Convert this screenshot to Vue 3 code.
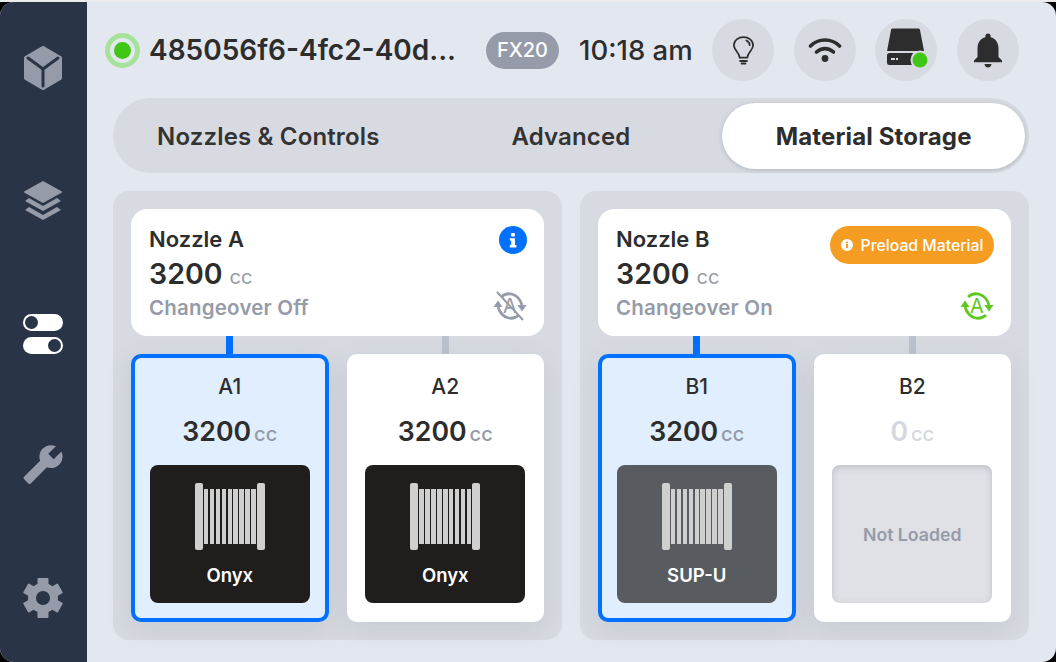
<script setup>
const tabs = ['Nozzles & Controls', 'Advanced', 'Material Storage']
const gearTeeth = [0, 60, 120]
const ribs = [0, 1, 2, 3, 4, 5, 6, 7, 8]

const nozzles = [
  {
    name: 'Nozzle A',
    volume: 3200,
    changeover: false,
    slots: [
      { id: 'A1', volume: 3200, material: 'Onyx', active: true, tone: 'dark' },
      { id: 'A2', volume: 3200, material: 'Onyx', active: false, tone: 'dark' }
    ]
  },
  {
    name: 'Nozzle B',
    volume: 3200,
    changeover: true,
    slots: [
      { id: 'B1', volume: 3200, material: 'SUP-U', active: true, tone: 'grey' },
      { id: 'B2', volume: 0, material: '', active: false, tone: 'empty' }
    ]
  }
]
</script>

<template>
  <div class="frame">
    <div class="app">
      <nav class="sidebar">
        <svg class="side-icon" viewBox="0 0 40 44">
          <path d="M20 2 37 12 V32 L20 42 3 32 V12 Z" fill="#959ba8" stroke="#959ba8" stroke-width="4" stroke-linejoin="round" />
          <path d="M5 12 20 23 35 12 M20 23 V40" fill="none" stroke="#2a3447" stroke-width="3" stroke-linecap="round" stroke-linejoin="round" />
        </svg>
        <svg class="side-icon" viewBox="0 0 40 42">
          <path d="M20 2 38 12 20 22 2 12 Z" fill="#959ba8" stroke="#959ba8" stroke-width="2" stroke-linejoin="round" />
          <path d="M6 18 2 21 20 31 38 21 34 18 20 26 Z" fill="#959ba8" />
          <path d="M6 27 2 30 20 40 38 30 34 27 20 35 Z" fill="#959ba8" />
        </svg>
        <div class="toggles">
          <span class="toggle left"><i></i></span>
          <span class="toggle right"><i></i></span>
        </div>
        <svg class="side-icon" viewBox="0.7 1 22.6 22.6">
          <path transform="translate(24 0) scale(-1 1)" d="M22.7 19l-9.1-9.1c.9-2.3.4-5-1.5-6.9-2-2-5-2.4-7.4-1.3L9 6 6 9 1.6 4.7C.4 7.1.9 10.1 2.9 12.1c1.9 1.9 4.6 2.4 6.9 1.5l9.1 9.1c.4.4 1 .4 1.4 0l2.3-2.3c.5-.4.5-1.1.1-1.4z" fill="#959ba8" />
        </svg>
        <svg class="side-icon" viewBox="0 0 40 40">
          <rect v-for="a in gearTeeth" :key="a" x="14.5" y="0" width="11" height="40" rx="1" fill="#959ba8" :transform="`rotate(${a} 20 20)`" />
          <circle cx="20" cy="20" r="15" fill="#959ba8" />
          <circle cx="20" cy="20" r="7" fill="#2a3447" />
        </svg>
      </nav>

      <main class="main">
        <header class="topbar">
          <span class="status"><i></i></span>
          <span class="device">485056f6-4fc2-40d...</span>
          <span class="chip">FX20</span>
          <span class="time">10:18 am</span>
          <div class="round-btns">
            <button class="round">
              <svg width="23" height="30" viewBox="0 0 24 30" fill="none" stroke="#2d2d2d" stroke-width="1.8" stroke-linecap="round" stroke-linejoin="round">
                <path d="M8 23 C8 18 2 15 2 10 C2 5 6.5 1.5 12 1.5 C17.5 1.5 22 5 22 10 C22 15 16 18 16 23 Z" />
                <path d="M8.5 26.5 H15.5 M10 29 H14" stroke-width="2" />
                <path d="M15 5 C17 6 18.5 8 18.5 10" />
              </svg>
            </button>
            <button class="round">
              <svg width="34" height="26" viewBox="0 0 34 26" fill="none" stroke="#2d2d2d" stroke-width="3.6" stroke-linecap="round">
                <path d="M2.5 9 C10.5 1 23.5 1 31.5 9" />
                <path d="M8.5 15 C13.5 10.5 20.5 10.5 25.5 15" />
                <circle cx="17" cy="21.5" r="3.4" fill="#2d2d2d" stroke="none" />
              </svg>
            </button>
            <button class="round">
              <svg width="48" height="44" viewBox="0 0 48 44">
                <path d="M9 2 C9 1 10 0.5 11 0.5 H36 C37 0.5 38 1 38 2 L42 23 H5 Z" fill="#2d2d2d" />
                <rect x="5" y="25" width="37" height="12" rx="2.5" fill="#2d2d2d" />
                <rect x="9" y="30" width="4" height="2" fill="#d7dae1" />
                <rect x="14" y="30" width="2" height="2" fill="#d7dae1" />
                <circle cx="38" cy="32" r="9.5" fill="#d7dae1" />
                <circle cx="38" cy="32" r="7.5" fill="#40c616" />
              </svg>
            </button>
            <button class="round">
              <svg width="42" height="42" viewBox="0 0 24 24">
                <path d="M12 22c1.1 0 2-.9 2-2h-4c0 1.1.89 2 2 2zm6-6v-5c0-3.07-1.64-5.64-4.5-6.32V4c0-.83-.67-1.5-1.5-1.5s-1.5.67-1.5 1.5v.68C7.63 5.36 6 7.92 6 11v5l-2 2v1h16v-1l-2-2z" fill="#2d2d2d" />
              </svg>
            </button>
          </div>
        </header>

        <div class="tabs">
          <div v-for="(t, i) in tabs" :key="t" class="tab" :class="{ active: i === 2 }">{{ t }}</div>
        </div>

        <section class="panels">
          <div v-for="n in nozzles" :key="n.name" class="panel">
            <div class="card">
              <div class="card-text">
                <div class="card-name">{{ n.name }}</div>
                <div class="card-vol">{{ n.volume }}<span>cc</span></div>
                <div class="card-state">Changeover {{ n.changeover ? 'On' : 'Off' }}</div>
              </div>
              <div class="card-side">
                <span v-if="n.changeover" class="preload">
                  <svg width="12" height="12" viewBox="0 0 12 12">
                    <circle cx="6" cy="6" r="6" fill="#fff" />
                    <rect x="5" y="5" width="2" height="4" fill="#f59c23" />
                    <rect x="5" y="2.6" width="2" height="1.6" fill="#f59c23" />
                  </svg>
                  Preload Material
                </span>
                <svg v-else width="28" height="28" viewBox="0 0 28 28">
                  <circle cx="14" cy="14" r="14" fill="#0071fe" />
                  <rect x="12" y="7" width="4" height="3.5" rx="1" fill="#fff" />
                  <path d="M10.8 12.2 H16 V19 H17.4 V21.4 H10.8 V19 H12.2 V14.6 H10.8 Z" fill="#fff" />
                </svg>
                <svg class="cycle" width="36" height="30" viewBox="0 0 36 30" fill="none" :stroke="n.changeover ? '#5fc81e' : '#959ba8'" stroke-width="2.8">
                  <path d="M9 6 C15 0.5 26 1.5 30 14" />
                  <path d="M27 24 C21 29.5 10 28.5 6 16" />
                  <path d="M25.5 14 H34.5 L30 20.5 Z" :fill="n.changeover ? '#5fc81e' : '#959ba8'" stroke="none" />
                  <path d="M1.5 16 H10.5 L6 9.5 Z" :fill="n.changeover ? '#5fc81e' : '#959ba8'" stroke="none" />
                  <text x="18" y="22" text-anchor="middle" class="cycle-a" :fill="n.changeover ? '#5fc81e' : '#959ba8'" stroke="none">A</text>
                  <path v-if="!n.changeover" d="M5 1 L31 29" stroke-width="2" />
                </svg>
              </div>
            </div>

            <div class="slots">
              <div v-for="s in n.slots" :key="s.id" class="slot-col">
                <span class="stem" :class="{ on: s.active }"></span>
                <div class="slot" :class="{ active: s.active }">
                  <div class="slot-id">{{ s.id }}</div>
                  <div class="slot-vol" :class="{ none: !s.volume }">{{ s.volume }}<span>cc</span></div>
                  <div class="spool-box" :class="s.tone">
                    <template v-if="s.material">
                      <div class="spool">
                        <span class="flange"></span>
                        <div class="ribs"><i v-for="r in ribs" :key="r"></i></div>
                        <span class="flange"></span>
                      </div>
                      <div class="material">{{ s.material }}</div>
                    </template>
                    <div v-else class="not-loaded">Not Loaded</div>
                  </div>
                </div>
              </div>
            </div>
          </div>
        </section>
      </main>
    </div>
  </div>
</template>

<style>
html, body { margin: 0; background: #000; overflow: hidden; }
</style>

<style scoped>
.frame {
  width: 1056px; height: 662px; box-sizing: border-box; border-top: 2px solid #ececec; background: #000;
  font-family: Inter, "Noto Sans", sans-serif; color: #2d2d2d;
}
.app {
  display: flex; height: 100%; border-radius: 14px; overflow: hidden; background: #e3e7ef;
}

.sidebar {
  width: 87px; flex: none; box-sizing: border-box; background: #2a3447; padding: 44px 1px 42px 0;
  display: flex; flex-direction: column; align-items: center; justify-content: space-between;
}
.side-icon { width: 40px; height: 44px; display: block; }
.toggles { display: flex; flex-direction: column; gap: 6px; margin-top: 2px; }
.toggle { width: 40px; height: 17px; border-radius: 9px; background: #fff; display: flex; align-items: center; padding: 0 2px; box-sizing: border-box; }
.toggle i { width: 13px; height: 13px; border-radius: 50%; background: #2a3447; }
.toggle.right { justify-content: flex-end; }

.main { flex: 1; min-width: 0; box-sizing: border-box; padding: 0 27px 0 26px; }

.topbar { height: 96px; display: flex; align-items: center; }
.status {
  width: 35px; height: 35px; box-sizing: border-box; border-radius: 50%; background: #e3e7ef; border: 5px solid #a7e29a;
  margin-left: -8px; margin-right: 9px; display: flex; align-items: center; justify-content: center; flex: none;
}
.status i { width: 17px; height: 17px; border-radius: 50%; background: #40c616; }
.device { font-size: 28px; font-weight: 600; white-space: nowrap; width: 337px; flex: none; }
.chip {
  width: 73px; height: 37px; border-radius: 19px; background: #959ba8; color: #fff; font-size: 20px; font-weight: 500;
  display: flex; align-items: center; justify-content: center; flex: none;
}
.time { font-size: 27.5px; font-weight: 500; margin-left: 20px; white-space: nowrap; }
.round-btns { margin-left: auto; margin-right: 10px; display: flex; gap: 19.67px; }
.round {
  width: 62px; height: 62px; border: none; border-radius: 50%; background: #d7dae1; padding: 0;
  display: flex; align-items: center; justify-content: center;
}

.tabs {
  height: 75px; box-sizing: border-box; border-radius: 38px; background: #d7dae1; padding: 5px 4px 4px 4px;
  display: grid; grid-template-columns: repeat(3, minmax(0, 1fr));
}
.tab { display: flex; align-items: center; justify-content: center; font-size: 24px; font-weight: 600; color: #333; letter-spacing: 0.15px; }
.tab.active { background: #fff; border-radius: 33px; color: #2d2d2d; font-weight: 700; box-shadow: 0 1px 4px rgba(60, 70, 90, 0.25); }

.panels { display: grid; grid-template-columns: repeat(2, minmax(0, 1fr)); gap: 18px; margin-top: 18px; }
.panel { height: 449px; box-sizing: border-box; padding: 18px; border-radius: 16px; background: #d7dae1; }

.card {
  height: 127px; box-sizing: border-box; background: #fff; border-radius: 16px; padding: 16px 17px 15px 18px;
  display: flex; justify-content: space-between;
}
.card-name { font-size: 22px; font-weight: 600; line-height: 28px; }
.card-vol { font-size: 28.5px; font-weight: 600; line-height: 36px; margin-top: 3px; }
.card-vol span { font-size: 20px; font-weight: 400; color: #959ba8; margin-left: 7px; }
.card-state { font-size: 20.5px; font-weight: 600; color: #959ba8; line-height: 28px; margin-top: -1px; letter-spacing: 0.2px; }
.card-side { display: flex; flex-direction: column; align-items: flex-end; justify-content: space-between; padding-top: 1px; }
.preload {
  height: 38px; width: 164px; border-radius: 19px; background: #f59c23; color: #fff; font-size: 15.8px; font-weight: 500;
  display: flex; align-items: center; justify-content: center; gap: 8px;
}
.cycle { margin-right: -1px; }
.cycle-a { font-size: 20px; font-weight: 400; font-family: Inter, sans-serif; }

.slots { display: grid; grid-template-columns: repeat(2, minmax(0, 1fr)); gap: 18px; }
.slot-col { display: flex; flex-direction: column; align-items: center; }
.stem { width: 7px; height: 18px; background: #bcc2cd; }
.stem.on { background: #0071fe; }
.slot {
  width: 100%; height: 268px; box-sizing: border-box; background: #fff; border-radius: 10px; padding: 19px;
  display: flex; flex-direction: column; align-items: center; box-shadow: 0 8px 28px rgba(60, 70, 90, 0.1);
}
.slot.active { background: #e0eefe; border: 4px solid #0071fe; padding: 15px; }
.slot-id { font-size: 21px; font-weight: 500; line-height: 28px; }
.slot-vol { font-size: 26.7px; font-weight: 600; line-height: 36px; margin-top: 12px; }
.slot-vol span { font-size: 20px; font-weight: 500; color: #959ba8; margin-left: 3px; }
.slot-vol.none, .slot-vol.none span { color: #d5d8de; }
.spool-box {
  width: 160px; height: 138px; margin-top: auto; border-radius: 8px; display: flex; flex-direction: column; align-items: center;
  box-sizing: border-box; padding-top: 18px;
}
.spool-box.dark { background: #1f1e1d; }
.spool-box.grey { background: #585b60; }
.spool-box.empty { background: #e0e1e6; padding-top: 0; justify-content: center; box-shadow: inset 0 2px 6px rgba(60, 70, 90, 0.22); }
.spool { display: flex; align-items: center; height: 67px; }
.flange { width: 8px; height: 67px; border-radius: 2px; background: #cfcfcf; }
.ribs { display: flex; gap: 1.4px; height: 55px; padding: 0 1px; }
.ribs i { width: 4.5px; background: #cfcfcf; }
.material { color: #fff; font-size: 18.5px; font-weight: 600; margin-top: 14px; line-height: 22px; }
.not-loaded { color: #959ba8; font-size: 17.7px; font-weight: 600; }
</style>
